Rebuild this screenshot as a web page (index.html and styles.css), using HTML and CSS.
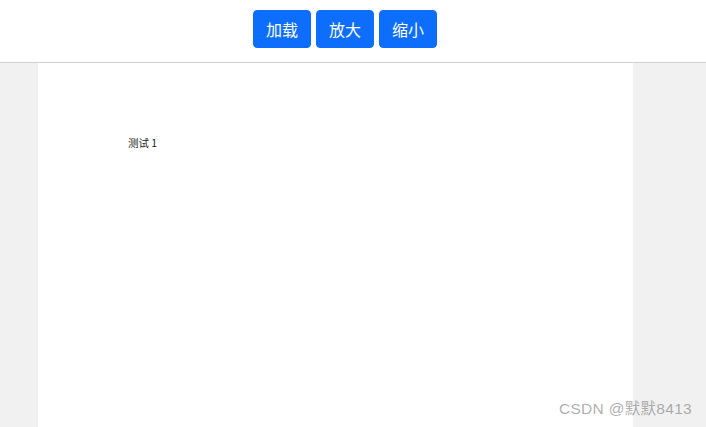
FILE: index.html
```html
<!DOCTYPE html>
<html lang="zh">
<head>
<meta charset="utf-8">
<title>PDF Viewer</title>
<link rel="stylesheet" href="styles.css">
</head>
<body>
<div class="toolbar">
  <button class="btn">加载</button>
  <button class="btn">放大</button>
  <button class="btn">缩小</button>
</div>
<div class="viewer">
  <div class="page">
    <p class="page-text">测试 1</p>
  </div>
</div>
<div class="watermark">CSDN @默默8413</div>
</body>
</html>
```
FILE: styles.css
```css
html, body {
  margin: 0;
  padding: 0;
  height: 100%;
  overflow: hidden;
  font-family: "Noto Sans CJK SC", "Liberation Sans", sans-serif;
  background: #ffffff;
}

.toolbar {
  height: 52px;
  padding: 10px 0 0 253px;
  border-bottom: 1px solid #cfcfcf;
  display: flex;
  align-items: flex-start;
  gap: 5px;
  background: #ffffff;
}

.btn {
  width: 58px;
  height: 38px;
  padding: 0;
  border: 1px solid #0d6efd;
  border-radius: 4px;
  background: #0d6efd;
  color: #ffffff;
  font-family: "Noto Sans CJK SC", "Liberation Sans", sans-serif;
  font-size: 16px;
  line-height: 36px;
  cursor: pointer;
}

.viewer {
  background: #f1f1f1;
  padding-left: 38px;
  height: 364px;
  overflow: hidden;
  display: flex;
  align-items: flex-start;
}

.page {
  width: 595px;
  height: 364px;
  background: #ffffff;
  flex: none;
  padding: 72px 0 0 90px;
  box-sizing: border-box;
}

.page-text {
  margin: 0;
  font-family: "Noto Sans CJK SC", "Liberation Sans", sans-serif;
  font-size: 10.5px;
  line-height: 15px;
  color: #222222;
}

.watermark {
  position: absolute;
  right: 14px;
  bottom: 9px;
  font-family: "Liberation Sans", "Noto Sans CJK SC", sans-serif;
  font-size: 15.5px;
  color: rgba(120, 120, 120, 0.6);
  letter-spacing: 0.3px;
}
```
